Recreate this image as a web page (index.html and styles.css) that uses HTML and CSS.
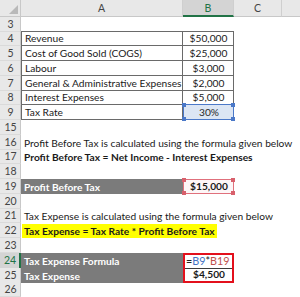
FILE: index.html
```html
<!DOCTYPE html>
<html>
<head>
<meta charset="utf-8">
<link rel="stylesheet" href="styles.css">
</head>
<body>
<div class="sheet">
  <div class="row hdr">
    <div class="rh corner"><span class="tri"></span></div>
    <div class="ch">A</div>
    <div class="ch sel">B</div>
    <div class="ch">C</div>
    <div class="ch last"></div>
  </div>

  <div class="row h15"><div class="rh">3</div><div class="c tb-bottom"></div><div class="c tb-bottom"></div><div class="c"></div><div class="c"></div></div>
  <div class="row h14"><div class="rh">4</div><div class="c t tl">Revenue</div><div class="c t num">$50,000</div><div class="c"></div><div class="c"></div></div>
  <div class="row h15"><div class="rh">5</div><div class="c t tl">Cost of Good Sold (COGS)</div><div class="c t num">$25,000</div><div class="c"></div><div class="c"></div></div>
  <div class="row h15"><div class="rh">6</div><div class="c t tl">Labour</div><div class="c t num">$3,000</div><div class="c"></div><div class="c"></div></div>
  <div class="row h15"><div class="rh">7</div><div class="c t tl">General &amp; Administrative Expenses</div><div class="c t num">$2,000</div><div class="c"></div><div class="c"></div></div>
  <div class="row h14"><div class="rh">8</div><div class="c t tl">Interest Expenses</div><div class="c t num">$5,000</div><div class="c"></div><div class="c"></div></div>
  <div class="row h15"><div class="rh">9</div><div class="c t tl">Tax Rate</div><div class="c t num ref-blue"><span class="hd h1"></span><span class="hd h2"></span><span class="hd h3"></span><span class="hd h4"></span>30%</div><div class="c"></div><div class="c"></div></div>

  <div class="row h15"><div class="rh">15</div><div class="c"></div><div class="c"></div><div class="c"></div><div class="c"></div></div>
  <div class="row h15"><div class="rh">16</div><div class="c over">Profit Before Tax is calculated using the formula given below</div><div class="c"></div><div class="c"></div><div class="c"></div></div>
  <div class="row h14"><div class="rh">17</div><div class="c over b">Profit Before Tax = Net Income - Interest Expenses</div><div class="c"></div><div class="c"></div><div class="c"></div></div>
  <div class="row h15"><div class="rh">18</div><div class="c"></div><div class="c"></div><div class="c"></div><div class="c"></div></div>
  <div class="row h15"><div class="rh">19</div><div class="c band">Profit Before Tax</div><div class="c num b ref-red"><span class="hd r1"></span><span class="hd r2"></span><span class="hd r3"></span><span class="hd r4"></span>$15,000</div><div class="c"></div><div class="c"></div></div>
  <div class="row h15"><div class="rh">20</div><div class="c"></div><div class="c"></div><div class="c"></div><div class="c"></div></div>
  <div class="row h14"><div class="rh">21</div><div class="c over">Tax Expense is calculated using the formula given below</div><div class="c"></div><div class="c"></div><div class="c"></div></div>
  <div class="row h15"><div class="rh">22</div><div class="c over b"><span class="hl">Tax Expense = Tax Rate * Profit Before Tax</span></div><div class="c"></div><div class="c"></div><div class="c"></div></div>
  <div class="row h15"><div class="rh">23</div><div class="c"></div><div class="c"></div><div class="c"></div><div class="c"></div></div>
  <div class="row h15"><div class="rh selr">24</div><div class="c band sep">Tax Expense Formula</div><div class="c formula"><span class="eq">=</span><span class="rb">B9</span><span class="eq">*</span><span class="rr">B19</span></div><div class="c"></div><div class="c"></div></div>
  <div class="row h14"><div class="rh">25</div><div class="c band">Tax Expense</div><div class="c num b fx-bot">$4,500</div><div class="c"></div><div class="c"></div></div>
  <div class="row h15"><div class="rh">26</div><div class="c"></div><div class="c"></div><div class="c"></div><div class="c"></div></div>
</div>
</body>
</html>
```

FILE: styles.css
```css
* { box-sizing: border-box; }
html, body { margin: 0; padding: 0; background: #fff; }
body {
  width: 300px;
  height: 297px;
  overflow: hidden;
  font-family: Lato, "Open Sans", sans-serif;
  font-size: 10.2px;
  color: #1a1a1a;
}
.sheet { display: flex; flex-direction: column; }
.row {
  display: grid;
  grid-template-columns: 21px 162px 51px 48px 1fr;
}
.hdr { height: 17px; }
.h15 { height: 15px; }
.h14 { height: 14px; }

.rh {
  background: #e8e8e8;
  color: #444;
  border-right: 1px solid #c8c8c8;
  border-bottom: 1px solid #dadada;
  display: flex;
  align-items: center;
  justify-content: center;
  font-size: 10.5px;
  line-height: 1;
  padding-left: 1px;
}
.rh.selr {
  background: #d4d4d4;
  color: #217346;
  border-right: 2px solid #217346;
}
.corner {
  position: relative;
  border-bottom: 1px solid #c8c8c8;
}
.tri {
  position: absolute;
  right: 2px;
  bottom: 2px;
  width: 0;
  height: 0;
  border-left: 9px solid transparent;
  border-bottom: 9px solid #b9b9b9;
}
.ch {
  background: #e8e8e8;
  color: #444;
  border-right: 1px solid #cfcfcf;
  border-bottom: 1px solid #c8c8c8;
  display: flex;
  align-items: center;
  justify-content: center;
  font-size: 10.5px;
}
.ch.sel {
  background: #d4d4d4;
  color: #217346;
  border-bottom: 2px solid #217346;
}
.ch.last { border-right: none; }

.c {
  position: relative;
  display: flex;
  align-items: flex-end;
  padding: 0 2px 1px 3px;
  white-space: nowrap;
  line-height: 12px;
}
.over { overflow: visible; z-index: 1; }
.b { font-weight: 700; }
.tb-bottom { border-bottom: 1px solid #6a6a6a; }
.t {
  border-right: 1px solid #6a6a6a;
  border-bottom: 1px solid #6a6a6a;
}
.tl { border-left: 1px solid #6a6a6a; }
.num { justify-content: center; }

.ref-blue {
  background: #dce6f4;
  border: 1px solid #4a78c8;
  margin-top: -1px;
  color: #2a2a2a;
}
.ref-red {
  border: 1px solid #e0707c;
  background: #fdf6f7;
}
.hd {
  position: absolute;
  width: 4px;
  height: 4px;
}
.ref-blue .hd { background: #4a78c8; }
.ref-red .hd { background: #d8606c; }
.h1, .r1 { left: -2px; top: -2px; }
.h2, .r2 { right: -2px; top: -2px; }
.h3, .r3 { left: -2px; bottom: -2px; }
.h4, .r4 { right: -2px; bottom: -2px; }

.band {
  background: #7b7b7b;
  color: #fff;
  font-weight: 700;
}
.band.sep { border-bottom: 1px solid #3c3c3c; }

.hl {
  background: #ffff00;
  margin-left: -2px;
  padding: 0 2px 0 2px;
  line-height: 14px;
  margin-bottom: -1px;
}

.formula {
  border: 2px solid #e3101c;
  border-bottom: 1px solid #3a3a3a;
  padding-left: 1px;
  justify-content: flex-start;
  font-size: 10.8px;
}
.fx-bot {
  border: 2px solid #e3101c;
  border-top: none;
}
.eq { color: #222; }
.rb { color: #4472c4; }
.rr { color: #c0504d; }
```
